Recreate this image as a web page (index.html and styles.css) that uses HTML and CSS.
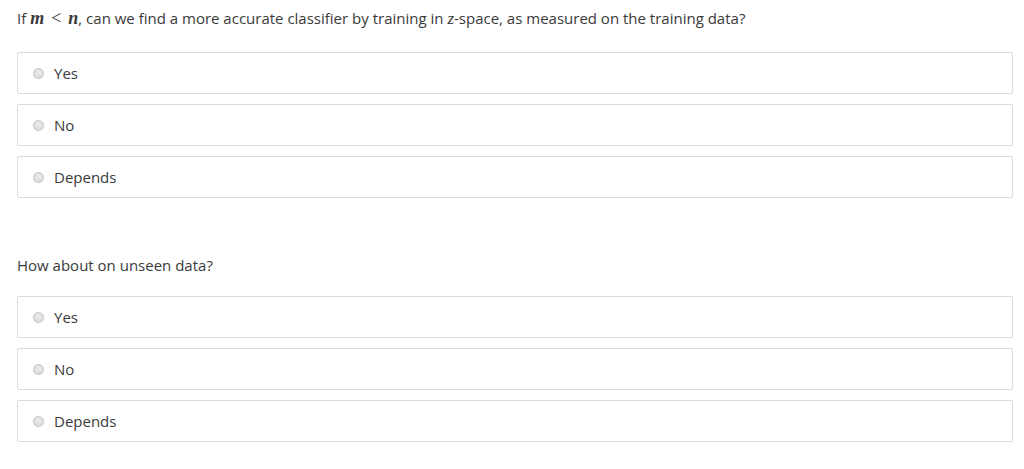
FILE: index.html
```html
<!DOCTYPE html>
<html>
<head>
<meta charset="utf-8">
<link rel="stylesheet" href="styles.css">
</head>
<body>
<div class="page">
  <p class="question q1">If <span class="math"><i class="mv">m</i><span class="mo">&lt;</span><i class="mv">n</i></span>, can we find a more accurate classifier by training in <i class="mv z">z</i>-space, as measured on the training data?</p>
  <div class="options">
    <label class="option"><span class="radio"></span><span class="label">Yes</span></label>
    <label class="option"><span class="radio"></span><span class="label">No</span></label>
    <label class="option"><span class="radio"></span><span class="label">Depends</span></label>
  </div>
  <p class="question q2">How about on unseen data?</p>
  <div class="options">
    <label class="option"><span class="radio"></span><span class="label">Yes</span></label>
    <label class="option"><span class="radio"></span><span class="label">No</span></label>
    <label class="option"><span class="radio"></span><span class="label">Depends</span></label>
  </div>
</div>
</body>
</html>
```
FILE: styles.css
```css
html, body {
  margin: 0;
  padding: 0;
  background: #ffffff;
}
.page {
  padding: 8px 11px 0 17px;
  font-family: "Open Sans", "DejaVu Sans", sans-serif;
  font-size: 15px;
  color: #3a3a3a;
}
.question {
  margin: 0;
  line-height: 20px;
}
.q1 {
  height: 20px;
  margin-bottom: 24px;
}
.q2 {
  margin-top: 57px;
  margin-bottom: 21px;
}
.math {
  font-family: "Liberation Serif", serif;
  font-size: 18px;
  line-height: 1;
}
.mv {
  font-family: "Liberation Serif", serif;
  font-style: italic;
  font-size: 18px;
  font-weight: bold;
  line-height: 1;
}
.mv.z {
  font-weight: normal;
  font-size: 17px;
}
.mo {
  font-style: normal;
  padding: 0 7px;
}
.options {
  display: flex;
  flex-direction: column;
  gap: 10px;
}
.option {
  display: flex;
  align-items: center;
  height: 40px;
  border: 1px solid #dcdcdc;
  border-radius: 2px;
  padding-left: 15px;
  box-sizing: content-box;
}
.radio {
  width: 9px;
  height: 9px;
  border-radius: 50%;
  border: 1px solid #c4c4c4;
  background: radial-gradient(circle at 50% 40%, #ececec 0%, #d6d6d6 100%);
  margin-right: 10px;
  flex: none;
}
.label {
  line-height: 20px;
}
```
